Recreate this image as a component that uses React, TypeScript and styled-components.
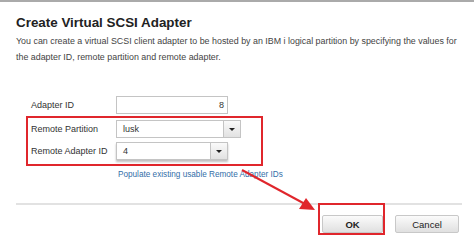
import React from "react";
import styled, { createGlobalStyle } from "styled-components";

const Global = createGlobalStyle`
  html, body { margin: 0; padding: 0; background: #fff; }
  body { font-family: "Liberation Sans", Arial, sans-serif; color: #333; }
  * { box-sizing: border-box; }
`;

const Page = styled.div`
  position: relative;
  width: 474px;
  height: 239px;
  overflow: hidden;
  background: #fff;
`;

const TopBar = styled.div`
  height: 2px;
  background: #aaaaaa;
`;

const Dialog = styled.div`
  padding: 0 12px 0 16px;
`;

const Title = styled.h1`
  margin: 13px 0 0;
  font-size: 13.4px;
  line-height: 16px;
  font-weight: bold;
  color: #222;
`;

const Description = styled.p`
  margin: 2px 0 0;
  font-size: 8.9px;
  line-height: 16px;
  color: #444;
  white-space: nowrap;
`;

const Form = styled.div`
  margin-top: 31px;
  padding-left: 10px;
  display: flex;
  flex-direction: column;
`;

const PlainRow = styled.div`
  display: flex;
  align-items: center;
  padding-left: 5px;
`;

const HighlightBox = styled.div`
  margin-top: 2px;
  width: 237px;
  border: 2px solid #e0262c;
  padding: 2px 0 4px 3px;
  display: flex;
  flex-direction: column;
  gap: 4px;
`;

const Row = styled.div`
  display: flex;
  align-items: center;
`;

const Label = styled.label`
  width: 85px;
  font-size: 9px;
  color: #333;
`;

const TextInput = styled.div`
  width: 112px;
  height: 18px;
  border: 1px solid #c4c4c4;
  background: #fff;
  font-size: 9px;
  color: #333;
  display: flex;
  align-items: center;
  justify-content: flex-end;
  padding-right: 3px;
`;

const Select = styled.div<{ $w: number; $shadow?: boolean }>`
  width: ${(p) => p.$w}px;
  height: 18px;
  border: 1px solid #c4c4c4;
  background: #fff;
  display: flex;
  box-shadow: ${(p) => (p.$shadow ? "0 2px 2px rgba(0,0,0,0.25)" : "none")};
`;

const SelectValue = styled.div`
  flex: 1;
  font-size: 9px;
  color: #333;
  display: flex;
  align-items: center;
  padding-left: 6px;
`;

const SelectButton = styled.div`
  width: 17px;
  border-left: 1px solid #c4c4c4;
  background: linear-gradient(#fafafa, #e2e2e2);
  display: flex;
  align-items: center;
  justify-content: center;
  &::after {
    content: "";
    border-left: 3px solid transparent;
    border-right: 3px solid transparent;
    border-top: 3px solid #222;
  }
`;

const Link = styled.a`
  margin: 3px 0 0 92px;
  font-size: 8.2px;
  line-height: 12px;
  color: #336ea8;
  text-decoration: none;
`;

const Divider = styled.div`
  margin-top: 22px;
  height: 2px;
  background: #e2e2e2;
`;

const Buttons = styled.div`
  margin-top: 10px;
  padding-right: 3px;
  display: flex;
  justify-content: flex-end;
  gap: 12px;
`;

const Highlight = styled.span`
  position: relative;
  display: inline-flex;
  &::after {
    content: "";
    position: absolute;
    left: -4px;
    right: -2px;
    top: -12px;
    bottom: -2px;
    border: 2px solid #e0262c;
    pointer-events: none;
  }
`;

const Button = styled.button<{ $w: number; $primary?: boolean }>`
  width: ${(p) => p.$w}px;
  height: 18px;
  border: 1px solid #c8c8c8;
  border-radius: 2px;
  background: linear-gradient(#fbfbfb, #e0e0e0);
  font-family: "Liberation Sans", Arial, sans-serif;
  font-size: 9.5px;
  font-weight: ${(p) => (p.$primary ? "bold" : "normal")};
  color: #222;
  padding: 0;
`;

const ArrowLayer = styled.svg`
  position: absolute;
  left: 0;
  top: 0;
  pointer-events: none;
`;

export default function App() {
  return (
    <Page>
      <Global />
      <TopBar />
      <Dialog>
        <Title>Create Virtual SCSI Adapter</Title>
        <Description>
          You can create a virtual SCSI client adapter to be hosted by an IBM i logical partition by specifying the values for
          <br />
          the adapter ID, remote partition and remote adapter.
        </Description>
        <Form>
          <PlainRow>
            <Label>Adapter ID</Label>
            <TextInput>8</TextInput>
          </PlainRow>
          <HighlightBox>
            <Row>
              <Label>Remote Partition</Label>
              <Select $w={125}>
                <SelectValue>lusk</SelectValue>
                <SelectButton />
              </Select>
            </Row>
            <Row>
              <Label>Remote Adapter ID</Label>
              <Select $w={112} $shadow>
                <SelectValue>4</SelectValue>
                <SelectButton />
              </Select>
            </Row>
          </HighlightBox>
          <Link href="#">Populate existing usable Remote Adapter IDs</Link>
        </Form>
        <Divider />
        <Buttons>
          <Highlight>
            <Button $w={61} $primary>OK</Button>
          </Highlight>
          <Button $w={64}>Cancel</Button>
        </Buttons>
      </Dialog>
      <ArrowLayer width="474" height="239" viewBox="0 0 474 239">
        <line x1="242" y1="170" x2="305" y2="204" stroke="#e0262c" strokeWidth="2" />
        <polygon points="299,209 306,198 315,210" fill="#e0262c" />
      </ArrowLayer>
    </Page>
  );
}
